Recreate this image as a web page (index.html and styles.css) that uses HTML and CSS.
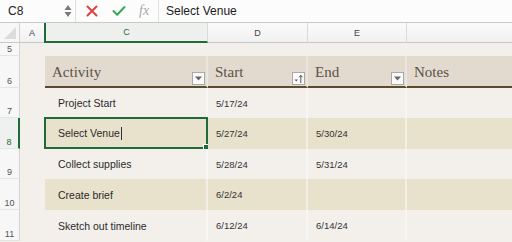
FILE: index.html
```html
<!DOCTYPE html>
<html>
<head>
<meta charset="utf-8">
<link rel="stylesheet" href="styles.css">
</head>
<body>
<div class="fbar">
  <div class="namebox">
    <span class="ref">C8</span>
    <svg class="spin" width="8" height="14" viewBox="0 0 8 14"><path d="M4 1 L7.5 6 L0.5 6 Z" fill="#7a7a7a"/><path d="M4 13 L7.5 8 L0.5 8 Z" fill="#7a7a7a"/></svg>
  </div>
  <div class="icons">
    <svg width="12" height="12" viewBox="0 0 12 12"><path d="M1.5 1.5 L10.5 10.5 M10.5 1.5 L1.5 10.5" stroke="#e2403f" stroke-width="2" stroke-linecap="round"/></svg>
    <svg width="14" height="12" viewBox="0 0 14 12"><path d="M1.5 6 L5.2 9.8 L12.5 2" stroke="#3aa757" stroke-width="2" fill="none" stroke-linecap="round" stroke-linejoin="round"/></svg>
    <span class="fx">fx</span>
  </div>
  <div class="ftext">Select Venue</div>
</div>
<div class="sheet">
  <div class="corner"><svg width="19" height="19" viewBox="0 0 19 19"><path d="M16 4 L16 16 L4 16 Z" fill="#dcdcdc"/></svg></div>
  <div class="ch">A</div>
  <div class="ch sel">C</div>
  <div class="ch">D</div>
  <div class="ch">E</div>
  <div class="ch last"></div>

  <div class="rh">5</div>
  <div class="bg"></div><div class="bg"></div><div class="bg"></div><div class="bg"></div><div class="bg"></div>

  <div class="rh">6</div>
  <div class="bg"></div>
  <div class="th"><span>Activity</span><span class="fbtn"><svg width="9" height="5" viewBox="0 0 9 5"><path d="M1 0.5 L8 0.5 L4.5 4.5 Z" fill="#666"/></svg></span></div>
  <div class="th"><span>Start</span><span class="fbtn"><svg width="11" height="11" viewBox="0 0 11 11"><path d="M1.5 6.5 L5 6.5 L3.25 8.5 Z" fill="#555"/><path d="M7.8 10 L7.8 2.5 M6 4.3 L7.8 2.3 L9.6 4.3" stroke="#555" stroke-width="1" fill="none"/></svg></span></div>
  <div class="th"><span>End</span><span class="fbtn"><svg width="9" height="5" viewBox="0 0 9 5"><path d="M1 0.5 L8 0.5 L4.5 4.5 Z" fill="#666"/></svg></span></div>
  <div class="th last"><span>Notes</span></div>

  <div class="rh">7</div>
  <div class="bg"></div>
  <div class="td t">Project Start</div>
  <div class="td d">5/17/24</div>
  <div class="td d"></div>
  <div class="td last"></div>

  <div class="rh cur">8</div>
  <div class="bg"></div>
  <div class="td t band active">Select Venue<span class="caret"></span><span class="handle"></span></div>
  <div class="td d band">5/27/24</div>
  <div class="td d band">5/30/24</div>
  <div class="td band last"></div>

  <div class="rh">9</div>
  <div class="bg"></div>
  <div class="td t">Collect supplies</div>
  <div class="td d">5/28/24</div>
  <div class="td d">5/31/24</div>
  <div class="td last"></div>

  <div class="rh">10</div>
  <div class="bg"></div>
  <div class="td t band">Create brief</div>
  <div class="td d band">6/2/24</div>
  <div class="td d band"></div>
  <div class="td band last"></div>

  <div class="rh">11</div>
  <div class="bg"></div>
  <div class="td t">Sketch out timeline</div>
  <div class="td d">6/12/24</div>
  <div class="td d">6/14/24</div>
  <div class="td last"></div>
</div>
</body>
</html>
```
FILE: styles.css
```css
html, body {
  margin: 0;
  padding: 0;
  background: #f3f0ec;
  overflow: hidden;
}
body {
  width: 512px;
  height: 242px;
  font-family: "Liberation Sans", Arial, sans-serif;
}
.fbar {
  display: flex;
  align-items: center;
  background: #fcfcfc;
  border-bottom: 1px solid #c9c9c9;
  box-sizing: border-box;
  height: 23px;
}
.namebox {
  width: 76px;
  height: 100%;
  box-sizing: border-box;
  display: flex;
  align-items: center;
  padding-left: 8px;
  padding-right: 3px;
  border-right: 1px solid #dedede;
}
.ref {
  font-size: 12px;
  color: #222;
  flex: 1;
}
.icons {
  width: 83px;
  height: 100%;
  box-sizing: border-box;
  display: flex;
  align-items: center;
  padding-left: 10px;
  border-right: 1px solid #e2e2e2;
}
.icons svg:nth-child(1) { margin-right: 14px; }
.icons svg:nth-child(2) { margin-right: 13px; }
.fx {
  font-family: "Liberation Serif", serif;
  font-style: italic;
  font-size: 14px;
  color: #a9a9a9;
  line-height: 1;
}
.ftext {
  padding-left: 7px;
  font-size: 12px;
  color: #1a1a1a;
}
.sheet {
  display: grid;
  grid-template-columns: 20px 25px 163px 100px 99px 1fr;
  grid-template-rows: 20px 13px 32px 30px 31px 30px 31px 31px;
}
.corner {
  background: #f7f7f7;
  border-right: 1px solid #d4d4d4;
  border-bottom: 1px solid #c7c7c7;
  box-sizing: border-box;
  display: flex;
}
.ch {
  background: linear-gradient(#fafafa, #f1f1f1);
  border-right: 1px solid #dadada;
  border-bottom: 1px solid #c7c7c7;
  box-sizing: border-box;
  font-size: 9px;
  color: #444;
  display: flex;
  align-items: center;
  justify-content: center;
}
.ch.sel {
  color: #1e6b3a;
  background: #eef0ee;
  border-bottom: 2px solid #1e6b3a;
  border-left: 2px solid #1e6b3a;
  margin-left: -1px;
}
.ch.last { border-right: none; }
.rh {
  background: #f7f7f7;
  border-right: 1px solid #d4d4d4;
  border-bottom: 1px solid #e4e4e4;
  box-sizing: border-box;
  font-size: 9px;
  color: #555;
  display: flex;
  align-items: flex-end;
  justify-content: center;
  padding-bottom: 1px;
}
.rh.cur {
  color: #1e6b3a;
  background: #eef1ef;
  border-right: 2px solid #1e6b3a;
}
.bg { background: #f3f0ec; }
.th {
  background: #e2d9cf;
  border-bottom: 2px solid #5c4a2c;
  border-right: 2px solid #ebe5de;
  box-sizing: border-box;
  display: flex;
  align-items: center;
  padding-left: 7px;
  font-family: "Liberation Serif", "Times New Roman", serif;
  font-size: 15px;
  color: #5e5246;
}
.th.last { border-right: none; }
.th span:first-child { flex: 1; padding-top: 2px; }
.fbtn {
  align-self: flex-end;
  margin: 0 1px 1px 0;
  width: 13px;
  height: 13px;
  box-sizing: border-box;
  background: #fafafa;
  border: 1px solid #a9a9a9;
  display: flex;
  align-items: center;
  justify-content: center;
}
.td {
  background: #f3f0ec;
  border-right: 2px solid #f8f6f3;
  box-sizing: border-box;
  display: flex;
  align-items: center;
  color: #2a2a2a;
  position: relative;
}
.td.last { border-right: none; }
.td.band { background: #e8e1cb; border-right-color: #f3efe3; }
.td.band.last { border-right: none; }
.t {
  padding-left: 13px;
  font-size: 10.5px;
}
.d {
  padding-left: 8px;
  font-size: 9.5px;
  color: #333;
}
.td.active {
  border: 2px solid #1d6b38;
  margin: -1px 0 0 -1px;
  padding-left: 12px;
}
.caret {
  display: inline-block;
  width: 1px;
  height: 13px;
  background: #333;
  margin-left: 1px;
}
.handle {
  position: absolute;
  right: -4px;
  bottom: -4px;
  width: 5px;
  height: 5px;
  background: #1d6b38;
  border: 1px solid #fff;
}
```
